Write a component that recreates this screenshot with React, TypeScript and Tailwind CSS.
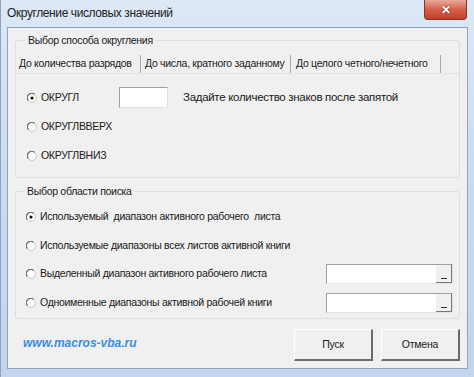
import React from "react";

const Radio = ({ checked }: { checked?: boolean }) => (
  <svg width="10" height="10" viewBox="0 0 10 10" className="shrink-0">
    <circle cx="5" cy="5" r="4.4" fill="#fff" stroke="#c8c8c8" strokeWidth="1" />
    <path d="M1.4 7.6 A4.4 4.4 0 0 1 7.6 1.4" stroke="#6a6a6a" fill="none" strokeWidth="1.2" />
    {checked && <circle cx="5" cy="5" r="1.6" fill="#111" />}
  </svg>
);

const RangeBox = () => (
  <div className="w-[127px] h-[20px] bg-white border-t border-l border-[#a0a0a0] border-b border-r border-b-[#e3e3e3] border-r-[#e3e3e3] flex justify-end">
    <div className="w-[16px] h-full bg-[#f0f0f0] border-r border-b border-[#777] flex items-end justify-center pb-[3px]">
      <div className="w-[6px] h-[1px] bg-[#333]" />
    </div>
  </div>
);

const Btn = ({ children }: { children: React.ReactNode }) => (
  <div className="w-[79px] h-[32px] bg-[#f0f0f0] border-t border-l border-white border-r-2 border-b-2 border-r-[#6b6b6b] border-b-[#6b6b6b] flex items-center justify-center text-[10.5px] tracking-[-0.2px] text-[#1a1a1a]">
    {children}
  </div>
);

export default function App() {
  const ui = { fontFamily: '"Liberation Sans", Arial, sans-serif' };
  return (
    <div
      className="w-[474px] h-[377px] bg-gradient-to-b from-[#dce8f6] via-[#c9dbef] to-[#c2d5ec] overflow-hidden border-l border-[#8aa3c2] relative whitespace-nowrap"
      style={ui}
    >
      <div className="h-[27px] flex items-center pl-[6px] pr-[7px] relative">
        <span className="text-[12px] tracking-[-0.4px] text-[#1e1e1e] mt-[-1px]">
          Округление числовых значений
        </span>
        <div className="absolute top-0 right-[7px] w-[43px] h-[20px] rounded-b-[4px] border border-t-0 border-[#8a3526] bg-gradient-to-b from-[#e8a99b] via-[#d4604b] to-[#c43e28] flex items-center justify-center">
          <span className="text-white font-bold text-[12px] leading-none" style={{ textShadow: "0 0 2px #5a1a10" }}>
            ✕
          </span>
        </div>
      </div>
      <div className="mx-[6px] h-[342px] bg-[#f0f0f0] border border-[#8ea4bf] text-[#1a1a1a] text-[10.5px] tracking-[-0.3px]">
        {/* Group 1 */}
        <div className="mt-[12px] ml-[7px] w-[445px] h-[138px] border border-[#d5dfe5] rounded-[3px] relative">
          <span className="absolute -top-[8px] left-[9px] px-[3px] bg-[#f0f0f0] leading-[14px]">
            Выбор способа округления
          </span>
          <div className="mt-[14px] h-[19px] flex items-center border-b border-[#e2e2e2]">
            <div className="w-[124px] pl-[3px] h-full flex items-center">До количества разрядов</div>
            <div className="w-[150px] pl-[4px] h-full flex items-center border-l border-[#a8a8a8]">До числа, кратного заданному</div>
            <div className="w-[151px] pl-[5px] h-full flex items-center border-l border-[#a8a8a8] border-r">До целого четного/нечетного</div>
          </div>
          <div className="mt-[9px]">
            <div className="h-[29px] flex items-center">
              <div className="w-[103px] pl-[11px] flex items-center gap-[4px]">
                <Radio checked />
                <span>ОКРУГЛ</span>
              </div>
              <div className="w-[49px] h-[21px] bg-white border-t border-l border-[#a0a0a0] border-r border-b border-r-[#e0e0e0] border-b-[#e0e0e0]" />
              <span className="ml-[15px] text-[11.5px] tracking-[-0.3px]">
                Задайте количество знаков после запятой
              </span>
            </div>
            <div className="h-[29px] flex items-center pl-[11px] gap-[4px]">
              <Radio />
              <span>ОКРУГЛВВЕРХ</span>
            </div>
            <div className="h-[29px] flex items-center pl-[11px] gap-[4px]">
              <Radio />
              <span>ОКРУГЛВНИЗ</span>
            </div>
          </div>
        </div>
        {/* Group 2 */}
        <div className="mt-[13px] ml-[7px] w-[445px] h-[128px] border border-[#d5dfe5] rounded-[3px] relative">
          <span className="absolute -top-[8px] left-[8px] px-[3px] bg-[#f0f0f0] leading-[14px]">
            Выбор области поиска
          </span>
          <div className="pt-[11px]">
            <div className="h-[28px] flex items-center pl-[10px] gap-[4px]">
              <Radio checked />
              <span className="whitespace-pre">Используемый  диапазон активного рабочего  листа</span>
            </div>
            <div className="h-[29px] flex items-center pl-[10px] gap-[4px]">
              <Radio />
              <span>Используемые диапазоны всех листов активной книги</span>
            </div>
            <div className="h-[28px] flex items-center pl-[10px] gap-[4px] pr-[6px]">
              <Radio />
              <span>Выделенный диапазон активного рабочего листа</span>
              <div className="ml-auto">
                <RangeBox />
              </div>
            </div>
            <div className="h-[29px] flex items-center pl-[10px] gap-[4px] pr-[6px]">
              <Radio />
              <span>Одноименные диапазоны активной рабочей книги</span>
              <div className="ml-auto">
                <RangeBox />
              </div>
            </div>
          </div>
        </div>
        {/* Bottom */}
        <div className="mt-[10px] ml-[15px] mr-[7px] flex items-center">
          <span className="text-[#3b8de4] font-bold italic text-[12px] tracking-normal mt-[-4px]">www.macros-vba.ru</span>
          <div className="ml-auto flex gap-[8px]">
            <Btn>Пуск</Btn>
            <Btn>Отмена</Btn>
          </div>
        </div>
      </div>
    </div>
  );
}
